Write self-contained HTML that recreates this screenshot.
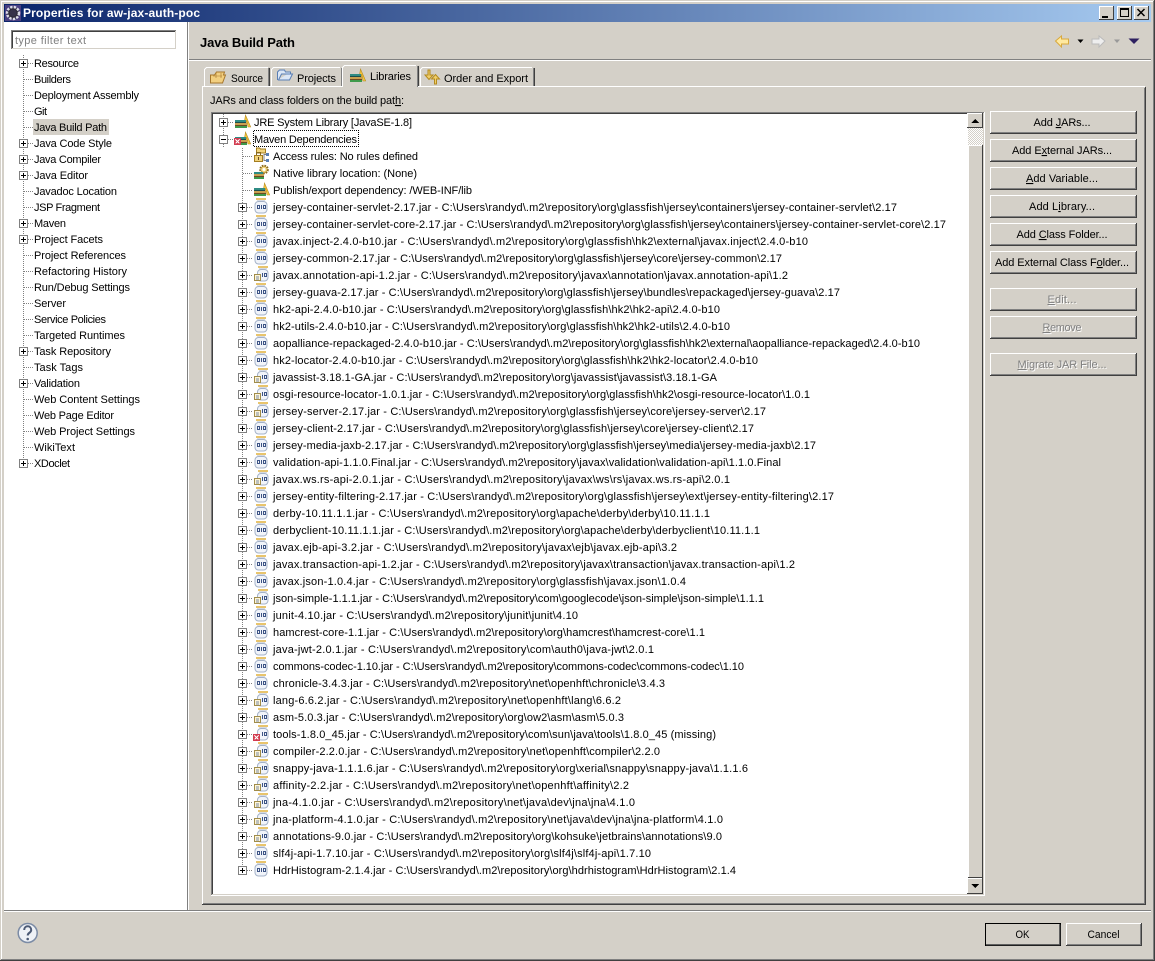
<!DOCTYPE html>
<html><head><meta charset="utf-8"><title>Properties for aw-jax-auth-poc</title>
<style>
html,body{margin:0;padding:0;background:#d4d0c8;overflow:hidden}
svg{display:block;font-family:"Liberation Sans",Arial,sans-serif;font-size:11px;fill:#000}
</style></head><body>
<svg width="1155" height="961" viewBox="0 0 1155 961" xmlns="http://www.w3.org/2000/svg" shape-rendering="crispEdges">
<defs>
<linearGradient id="tb" x1="0" x2="1" y1="0" y2="0"><stop offset="0" stop-color="#0a246a"/><stop offset="1" stop-color="#a6caf0"/></linearGradient>
<pattern id="chk" width="2" height="2" patternUnits="userSpaceOnUse"><rect width="2" height="2" fill="#fff"/><rect width="1" height="1" fill="#d4d0c8"/><rect x="1" y="1" width="1" height="1" fill="#d4d0c8"/></pattern>
<pattern id="dot" width="2" height="2" patternUnits="userSpaceOnUse"><rect width="1" height="1" fill="#000"/><rect x="1" y="1" width="1" height="1" fill="#000"/></pattern>
<symbol id="p" width="9" height="9" overflow="visible"><rect x=".5" y=".5" width="8" height="8" fill="#fff" stroke="#808080"/><path d="M2 4.500h5M4.500 2v5" stroke="#000" fill="none"/></symbol>
<symbol id="m" width="9" height="9" overflow="visible"><rect x=".5" y=".5" width="8" height="8" fill="#fff" stroke="#808080"/><path d="M2 4.500h5" stroke="#000" fill="none"/></symbol>
<symbol id="lib" width="16" height="16" overflow="visible">
<path d="M10.500 1L8.500 13h2.200l1-7 1.300 7h2.700z" fill="#f3c63e" stroke="#b88c20" stroke-width=".6" shape-rendering="auto"/>
<rect x="0" y="6" width="11" height="3" fill="#2f8c84"/><rect x="0" y="8" width="11" height="1" fill="#1d4f4a"/>
<rect x="0" y="9" width="12" height="2" fill="#c9a050"/><rect x="0" y="11" width="12" height="1" fill="#6b4a20"/>
<rect x="0" y="12" width="12" height="2" fill="#3f9a4c"/></symbol>
<symbol id="libx" width="16" height="16" overflow="visible"><use href="#lib"/><rect x="-1" y="7" width="7" height="7" fill="#d23c50"/><path d="M.5 8.500l4 4M4.500 8.500l-4 4" stroke="#fff" fill="none"/></symbol>
<symbol id="jar" width="16" height="16" overflow="visible"><rect x="2" y="-1" width="10" height="2" fill="#e8c46c"/><rect x="3" y="1" width="8" height="1" fill="#d6dbe4"/><rect x="1" y="2.500" width="12" height="11.500" rx="3.500" fill="#f1f4fa" stroke="#a4b2c8" shape-rendering="auto"/><g fill="none" stroke="#3d5485"><rect x="3.500" y="6.500" width="2" height="3"/><path d="M7.500 6v4"/><rect x="9.500" y="6.500" width="2" height="3"/></g></symbol>
<symbol id="jara" width="16" height="16" overflow="visible"><rect x="5" y="-1" width="10" height="2" fill="#e8c46c"/><rect x="6" y="1" width="8" height="1" fill="#d6dbe4"/><rect x="4.500" y="2.500" width="10.500" height="11.500" rx="3.500" fill="#f1f4fa" stroke="#a4b2c8" shape-rendering="auto"/><g fill="none" stroke="#3d5485"><path d="M9.500 6v4"/><rect x="11.500" y="6.500" width="2" height="3"/></g><rect x="1.500" y="7.500" width="6" height="6" fill="#fff6d8" stroke="#a08c4a"/><path d="M3 10h3M3 12h3" stroke="#7a8aa5" fill="none"/></symbol>
<symbol id="jarx" width="16" height="16" overflow="visible"><rect x="5" y="-1" width="10" height="2" fill="#e8c46c"/><rect x="6" y="1" width="8" height="1" fill="#d6dbe4"/><rect x="4.500" y="2.500" width="10.500" height="11.500" rx="3.500" fill="#f1f4fa" stroke="#a4b2c8" shape-rendering="auto"/><g fill="none" stroke="#3d5485"><path d="M9.500 6v4"/><rect x="11.500" y="6.500" width="2" height="3"/></g><rect x="0" y="8" width="7" height="7" fill="#d23c50"/><path d="M1.500 9.500l4 4M5.500 9.500l-4 4" stroke="#fff" fill="none"/></symbol>
<symbol id="btn" width="147" height="23" overflow="visible"><rect width="147" height="23" fill="#d4d0c8"/><path d="M.5 22V.5h146" stroke="#fff" fill="none"/><path d="M146.500 0v22.500H0" stroke="#404040" fill="none"/><path d="M145.500 1v20.500H1" stroke="#808080" fill="none"/></symbol>
<symbol id="btn2" width="76" height="23" overflow="visible"><rect width="76" height="23" fill="#d4d0c8"/><path d="M.5 22V.5h75" stroke="#fff" fill="none"/><path d="M75.500 0v22.500H0" stroke="#404040" fill="none"/><path d="M74.500 1v20.500H1" stroke="#808080" fill="none"/></symbol>
</defs>

<!-- window frame -->
<rect width="1155" height="961" fill="#d4d0c8"/>
<path d="M1.500 960V1.500H1154" stroke="#fff" fill="none"/>
<path d="M1154.500 0v960.500H0" stroke="#404040" fill="none"/>
<path d="M1153.500 1v958.500H1" stroke="#808080" fill="none"/>
<rect x="4" y="4" width="1147" height="18" fill="url(#tb)"/>
<rect x="5" y="5" width="16" height="16" fill="#4a3f80"/>
<g shape-rendering="auto"><circle cx="13" cy="13" r="6" fill="#2e2a3a" stroke="#dcdce6" stroke-width="2.500" stroke-dasharray="2.400 1.200"/><circle cx="13" cy="13" r="3.500" fill="#37324a"/></g>
<text x="23" y="17" font-weight="bold" font-size="12" style="fill:#fff" textLength="177">Properties for aw-jax-auth-poc</text>
<!-- window buttons -->
<g>
<rect x="1099" y="6" width="15" height="14" fill="#d4d0c8"/><path d="M1099.500 19V6.500H1113" stroke="#fff" fill="none"/><path d="M1113.500 6v13.500H1099" stroke="#404040" fill="none"/><rect x="1102" y="16" width="6" height="2" fill="#000"/>
<rect x="1117" y="6" width="15" height="14" fill="#d4d0c8"/><path d="M1117.500 19V6.500H1131" stroke="#fff" fill="none"/><path d="M1131.500 6v13.500H1117" stroke="#404040" fill="none"/><rect x="1120.500" y="8.500" width="8" height="8" fill="none" stroke="#000"/><rect x="1120" y="8" width="9" height="2" fill="#000"/>
<rect x="1134" y="6" width="15" height="14" fill="#d4d0c8"/><path d="M1134.500 19V6.500H1148" stroke="#fff" fill="none"/><path d="M1148.500 6v13.500H1134" stroke="#404040" fill="none"/><path d="M1137.500 9l7 7M1144.500 9l-7 7" stroke="#000" stroke-width="1.500" fill="none" shape-rendering="auto"/>
</g>

<!-- sidebar -->
<rect x="4" y="22" width="183" height="888" fill="#fff"/>
<rect x="187" y="22" width="1" height="888" fill="#808080"/>
<rect x="188" y="22" width="1" height="888" fill="#fff"/>
<rect x="4" y="910" width="1147" height="1" fill="#808080"/>
<rect x="4" y="911" width="1147" height="1" fill="#fff"/>
<rect x="189" y="59" width="962" height="1" fill="#808080"/>
<rect x="189" y="60" width="962" height="1" fill="#fff"/>
<!-- filter -->
<rect x="11" y="30" width="165" height="19" fill="#fff"/>
<path d="M11.500 49V30.500H176" stroke="#808080" fill="none"/>
<path d="M12.500 48V31.500H175" stroke="#404040" fill="none"/>
<path d="M175.500 31v17.500H12" stroke="#d4d0c8" fill="none"/>
<text x="15" y="44" style="fill:#808080" textLength="71">type filter text</text>
<!-- sidebar tree -->
<path d="M23.500 55V463" stroke="#808080" stroke-dasharray="1 1" fill="none"/>
<g stroke="#808080" stroke-dasharray="1 1" fill="none">
<path d="M28 63.500h5M24 79.500h9M24 95.500h9M24 111.500h9M24 127.500h9M28 143.500h5M28 159.500h5M28 175.500h5M24 191.500h9M24 207.500h9M28 223.500h5M28 239.500h5M24 255.500h9M24 271.500h9M24 287.500h9M24 303.500h9M24 319.500h9M24 335.500h9M28 351.500h5M24 367.500h9M28 383.500h5M24 399.500h9M24 415.500h9M24 431.500h9M24 447.500h9M28 463.500h5"/>
</g>
<rect x="33" y="119" width="76" height="16" fill="#d4d0c8"/>
<use href="#p" x="19" y="59"/><use href="#p" x="19" y="139"/><use href="#p" x="19" y="155"/><use href="#p" x="19" y="171"/><use href="#p" x="19" y="219"/><use href="#p" x="19" y="235"/><use href="#p" x="19" y="347"/><use href="#p" x="19" y="379"/><use href="#p" x="19" y="459"/>
<g>
<text x="34" y="67" textLength="45">Resource</text>
<text x="34" y="83" textLength="37">Builders</text>
<text x="34" y="99" textLength="105">Deployment Assembly</text>
<text x="34" y="115" textLength="13">Git</text>
<text x="34" y="131" textLength="73">Java Build Path</text>
<text x="34" y="147" textLength="78">Java Code Style</text>
<text x="34" y="163" textLength="67">Java Compiler</text>
<text x="34" y="179" textLength="54">Java Editor</text>
<text x="34" y="195" textLength="83">Javadoc Location</text>
<text x="34" y="211" textLength="66">JSP Fragment</text>
<text x="34" y="227" textLength="32">Maven</text>
<text x="34" y="243" textLength="69">Project Facets</text>
<text x="34" y="259" textLength="92">Project References</text>
<text x="34" y="275" textLength="93">Refactoring History</text>
<text x="34" y="291" textLength="96">Run/Debug Settings</text>
<text x="34" y="307" textLength="32">Server</text>
<text x="34" y="323" textLength="72">Service Policies</text>
<text x="34" y="339" textLength="91">Targeted Runtimes</text>
<text x="34" y="355" textLength="77">Task Repository</text>
<text x="34" y="371" textLength="49">Task Tags</text>
<text x="34" y="387" textLength="46">Validation</text>
<text x="34" y="403" textLength="106">Web Content Settings</text>
<text x="34" y="419" textLength="80">Web Page Editor</text>
<text x="34" y="435" textLength="101">Web Project Settings</text>
<text x="34" y="451" textLength="41">WikiText</text>
<text x="34" y="467" textLength="36">XDoclet</text>
</g>

<!-- header -->
<text x="200" y="47" font-weight="bold" font-size="13" textLength="95">Java Build Path</text>
<g shape-rendering="auto">
<path d="M1055.500 41l6-5v3h7v5h-7v3z" fill="#ffe9a0" stroke="#d9a93c"/>
<path d="M1077.500 39.500h6l-3 3.500z" fill="#000"/>
<path d="M1105 41l-6-5v3h-7v5h7v3z" fill="#eee" stroke="#bbb"/>
<path d="M1114 39.500h6l-3 3.500z" fill="#999"/>
<path d="M1128.500 38.500h11l-5.500 5.500z" fill="#2e2060"/>
</g>

<!-- tab panel -->
<rect x="202" y="87" width="944" height="818" fill="#d4d0c8"/>
<path d="M202.500 904V86.500H1145" stroke="#fff" fill="none"/>
<path d="M1145.500 87v817.500H202" stroke="#404040" fill="none"/>
<path d="M1144.500 88v815.500H203" stroke="#808080" fill="none"/>
<!-- tabs -->
<g fill="none">
<path d="M204.500 86V69.500l2-2H268" stroke="#fff"/><path d="M269.500 68V86" stroke="#404040"/><path d="M268.500 68V86" stroke="#808080"/>
<path d="M271.500 86V69.500l2-2H340" stroke="#fff"/><path d="M341.500 68V86" stroke="#808080"/>
<path d="M420.500 86V69.500l2-2H532" stroke="#fff"/><path d="M534.500 68V86" stroke="#404040"/><path d="M533.500 68V86" stroke="#808080"/>
</g>
<rect x="342" y="65" width="76" height="23" fill="#d4d0c8"/>
<path d="M342.500 87V67.500l2-2H416" stroke="#fff" fill="none"/>
<path d="M418.500 66V86" stroke="#404040" fill="none"/><path d="M417.500 66V87" stroke="#808080" fill="none"/>
<g shape-rendering="auto">
<path d="M210.500 83v-8h4l2-3h8l-1 3h2l-3 8z" fill="#f2cf80" stroke="#a6762b"/><path d="M216 73v5M221 73v5M213 76h9" stroke="#a6762b" stroke-width=".6" fill="none"/>
<path d="M277.500 80V72l2-2h5l1 2h5v2h-9l-3 6h11l3-6h-5" fill="#dce7f6" stroke="#5a7fb5"/>
<path d="M428 70v5h-3l4 4.500 4-4.500h-3v-5z" fill="#f1cf6a" stroke="#b48a1e"/><path d="M434.500 84v-5h-3l4-4.500 4 4.500h-3v5z" fill="#f1cf6a" stroke="#b48a1e"/>
</g>
<use href="#lib" x="350" y="68"/>
<text x="231" y="82" textLength="32" lengthAdjust="spacingAndGlyphs">Source</text>
<text x="297" y="82" textLength="39">Projects</text>
<text x="370" y="80" textLength="41">Libraries</text>
<text x="444" y="82" textLength="84">Order and Export</text>
<text x="210" y="104" textLength="194">JARs and class folders on the build pat<tspan text-decoration="underline">h</tspan>:</text>

<!-- list -->
<rect x="213" y="114" width="755" height="781" fill="#fff"/>
<path d="M211.500 895V112.500H984" stroke="#808080" fill="none"/>
<path d="M212.500 894V113.500H983" stroke="#404040" fill="none"/>
<path d="M984.500 112v783.500H211" stroke="#fff" fill="none"/>
<path d="M983.500 113v781.500H212" stroke="#d4d0c8" fill="none"/>
<!-- scrollbar -->
<rect x="968" y="128" width="15" height="17" fill="url(#chk)"/>
<g>
<rect x="967" y="113" width="16" height="15" fill="#d4d0c8"/><path d="M967.500 127V113.500H982" stroke="#fff" fill="none"/><path d="M982.500 113v14.500H967" stroke="#404040" fill="none"/><path d="M971 123h8l-4-4z" fill="#000"/>
<rect x="968" y="145" width="15" height="733" fill="#d4d0c8"/><path d="M968.500 877V145.500H982" stroke="#fff" fill="none"/><path d="M982.500 145v732.500H968" stroke="#404040" fill="none"/>
<rect x="967" y="878" width="16" height="16" fill="#d4d0c8"/><path d="M967.500 893V878.500H982" stroke="#fff" fill="none"/><path d="M982.500 878v15.500H967" stroke="#404040" fill="none"/><path d="M971 884h8l-4 4z" fill="#000"/>
</g>
<!-- tree lines -->
<g stroke="#808080" stroke-dasharray="1 1" fill="none">
<path d="M223.500 114V147M228 122.500h6M228 139.500h6M242.500 148V866M243 156.500h10M243 173.500h10M243 190.500h10"/>
<path d="M247 207.500h6M247 224.500h6M247 241.500h6M247 258.500h6M247 275.500h6M247 292.500h6M247 309.500h6M247 326.500h6M247 343.500h6M247 360.500h6M247 377.500h6M247 394.500h6M247 411.500h6M247 428.500h6M247 445.500h6M247 462.500h6M247 479.500h6M247 496.500h6M247 513.500h6M247 530.500h6M247 547.500h6M247 564.500h6M247 581.500h6M247 598.500h6M247 615.500h6M247 632.500h6M247 649.500h6M247 666.500h6M247 683.500h6M247 700.500h6M247 717.500h6M247 734.500h6M247 751.500h6M247 768.500h6M247 785.500h6M247 802.500h6M247 819.500h6M247 836.500h6M247 853.500h6M247 870.500h6"/>
</g>
<use href="#p" x="219" y="118"/><use href="#m" x="219" y="135"/>
<use href="#lib" x="235" y="114"/><use href="#libx" x="235" y="131"/>
<text x="254" y="126" textLength="158">JRE System Library [JavaSE-1.8]</text>
<g fill="url(#dot)"><rect x="253" y="130" width="106" height="1"/><rect x="253" y="146" width="106" height="1"/><rect x="253" y="130" width="1" height="17"/><rect x="358" y="130" width="1" height="17"/></g>
<text x="254" y="143" textLength="103">Maven Dependencies</text>
<!-- access rules icon -->
<path d="M256.500 153v-5h3l1 1h5v4z" fill="#f2d57e" stroke="#a37c1f"/>
<path d="M256.500 155v-2.500h4v2.500" fill="none" stroke="#8a6a1e"/>
<rect x="254.500" y="155.500" width="8" height="6" fill="#f0d27a" stroke="#a37c1f"/>
<rect x="258" y="157" width="1" height="3" fill="#6b4a20"/>
<path d="M264 154.500h2M264 154v6.500h2" stroke="#808080" fill="none"/>
<rect x="266" y="153" width="3" height="3" fill="#5a7fb5"/><rect x="266" y="159" width="3" height="3" fill="#5a7fb5"/>
<!-- native library icon -->
<g shape-rendering="auto"><circle cx="264" cy="169.500" r="3.800" fill="#f2d57e" stroke="#8a6a1e" stroke-width="2" stroke-dasharray="1.600 1"/><circle cx="264" cy="169.500" r="1.500" fill="#fff"/></g>
<rect x="254" y="172" width="9" height="2" fill="#2f8c84"/><rect x="254" y="174" width="10" height="2" fill="#c9a050"/><rect x="254" y="176" width="10" height="1" fill="#6b4a20"/><rect x="254" y="177" width="10" height="2" fill="#3f9a4c"/>
<use href="#lib" x="254" y="182"/>
<text x="273" y="160" textLength="145">Access rules: No rules defined</text>
<text x="273" y="177" textLength="144">Native library location: (None)</text>
<text x="273" y="194" textLength="199">Publish/export dependency: /WEB-INF/lib</text>

<g>
<use href="#p" x="238" y="203"/><use href="#jar" x="254" y="199"/><text x="273" y="211" textLength="624">jersey-container-servlet-2.17.jar - C:\Users\randyd\.m2\repository\org\glassfish\jersey\containers\jersey-container-servlet\2.17</text>
<use href="#p" x="238" y="220"/><use href="#jar" x="254" y="216"/><text x="273" y="228" textLength="673">jersey-container-servlet-core-2.17.jar - C:\Users\randyd\.m2\repository\org\glassfish\jersey\containers\jersey-container-servlet-core\2.17</text>
<use href="#p" x="238" y="237"/><use href="#jar" x="254" y="233"/><text x="273" y="245" textLength="535">javax.inject-2.4.0-b10.jar - C:\Users\randyd\.m2\repository\org\glassfish\hk2\external\javax.inject\2.4.0-b10</text>
<use href="#p" x="238" y="254"/><use href="#jar" x="254" y="250"/><text x="273" y="262" textLength="509">jersey-common-2.17.jar - C:\Users\randyd\.m2\repository\org\glassfish\jersey\core\jersey-common\2.17</text>
<use href="#p" x="238" y="271"/><use href="#jara" x="253" y="267"/><text x="273" y="279" textLength="515">javax.annotation-api-1.2.jar - C:\Users\randyd\.m2\repository\javax\annotation\javax.annotation-api\1.2</text>
<use href="#p" x="238" y="288"/><use href="#jar" x="254" y="284"/><text x="273" y="296" textLength="567">jersey-guava-2.17.jar - C:\Users\randyd\.m2\repository\org\glassfish\jersey\bundles\repackaged\jersey-guava\2.17</text>
<use href="#p" x="238" y="305"/><use href="#jar" x="254" y="301"/><text x="273" y="313" textLength="447">hk2-api-2.4.0-b10.jar - C:\Users\randyd\.m2\repository\org\glassfish\hk2\hk2-api\2.4.0-b10</text>
<use href="#p" x="238" y="322"/><use href="#jar" x="254" y="318"/><text x="273" y="330" textLength="457">hk2-utils-2.4.0-b10.jar - C:\Users\randyd\.m2\repository\org\glassfish\hk2\hk2-utils\2.4.0-b10</text>
<use href="#p" x="238" y="339"/><use href="#jar" x="254" y="335"/><text x="273" y="347" textLength="647">aopalliance-repackaged-2.4.0-b10.jar - C:\Users\randyd\.m2\repository\org\glassfish\hk2\external\aopalliance-repackaged\2.4.0-b10</text>
<use href="#p" x="238" y="356"/><use href="#jar" x="254" y="352"/><text x="273" y="364" textLength="485">hk2-locator-2.4.0-b10.jar - C:\Users\randyd\.m2\repository\org\glassfish\hk2\hk2-locator\2.4.0-b10</text>
<use href="#p" x="238" y="373"/><use href="#jara" x="253" y="369"/><text x="273" y="381" textLength="444">javassist-3.18.1-GA.jar - C:\Users\randyd\.m2\repository\org\javassist\javassist\3.18.1-GA</text>
<use href="#p" x="238" y="390"/><use href="#jara" x="253" y="386"/><text x="273" y="398" textLength="537">osgi-resource-locator-1.0.1.jar - C:\Users\randyd\.m2\repository\org\glassfish\hk2\osgi-resource-locator\1.0.1</text>
<use href="#p" x="238" y="407"/><use href="#jara" x="253" y="403"/><text x="273" y="415" textLength="493">jersey-server-2.17.jar - C:\Users\randyd\.m2\repository\org\glassfish\jersey\core\jersey-server\2.17</text>
<use href="#p" x="238" y="424"/><use href="#jar" x="254" y="420"/><text x="273" y="432" textLength="481">jersey-client-2.17.jar - C:\Users\randyd\.m2\repository\org\glassfish\jersey\core\jersey-client\2.17</text>
<use href="#p" x="238" y="441"/><use href="#jar" x="254" y="437"/><text x="273" y="449" textLength="543">jersey-media-jaxb-2.17.jar - C:\Users\randyd\.m2\repository\org\glassfish\jersey\media\jersey-media-jaxb\2.17</text>
<use href="#p" x="238" y="458"/><use href="#jar" x="254" y="454"/><text x="273" y="466" textLength="508">validation-api-1.1.0.Final.jar - C:\Users\randyd\.m2\repository\javax\validation\validation-api\1.1.0.Final</text>
<use href="#p" x="238" y="475"/><use href="#jara" x="253" y="471"/><text x="273" y="483" textLength="457">javax.ws.rs-api-2.0.1.jar - C:\Users\randyd\.m2\repository\javax\ws\rs\javax.ws.rs-api\2.0.1</text>
<use href="#p" x="238" y="492"/><use href="#jar" x="254" y="488"/><text x="273" y="500" textLength="561">jersey-entity-filtering-2.17.jar - C:\Users\randyd\.m2\repository\org\glassfish\jersey\ext\jersey-entity-filtering\2.17</text>
<use href="#p" x="238" y="509"/><use href="#jar" x="254" y="505"/><text x="273" y="517" textLength="437">derby-10.11.1.1.jar - C:\Users\randyd\.m2\repository\org\apache\derby\derby\10.11.1.1</text>
<use href="#p" x="238" y="526"/><use href="#jar" x="254" y="522"/><text x="273" y="534" textLength="487">derbyclient-10.11.1.1.jar - C:\Users\randyd\.m2\repository\org\apache\derby\derbyclient\10.11.1.1</text>
<use href="#p" x="238" y="543"/><use href="#jar" x="254" y="539"/><text x="273" y="551" textLength="404">javax.ejb-api-3.2.jar - C:\Users\randyd\.m2\repository\javax\ejb\javax.ejb-api\3.2</text>
<use href="#p" x="238" y="560"/><use href="#jar" x="254" y="556"/><text x="273" y="568" textLength="522">javax.transaction-api-1.2.jar - C:\Users\randyd\.m2\repository\javax\transaction\javax.transaction-api\1.2</text>
<use href="#p" x="238" y="577"/><use href="#jar" x="254" y="573"/><text x="273" y="585" textLength="413">javax.json-1.0.4.jar - C:\Users\randyd\.m2\repository\org\glassfish\javax.json\1.0.4</text>
<use href="#p" x="238" y="594"/><use href="#jara" x="253" y="590"/><text x="273" y="602" textLength="491">json-simple-1.1.1.jar - C:\Users\randyd\.m2\repository\com\googlecode\json-simple\json-simple\1.1.1</text>
<use href="#p" x="238" y="611"/><use href="#jar" x="254" y="607"/><text x="273" y="619" textLength="305">junit-4.10.jar - C:\Users\randyd\.m2\repository\junit\junit\4.10</text>
<use href="#p" x="238" y="628"/><use href="#jar" x="254" y="624"/><text x="273" y="636" textLength="432">hamcrest-core-1.1.jar - C:\Users\randyd\.m2\repository\org\hamcrest\hamcrest-core\1.1</text>
<use href="#p" x="238" y="645"/><use href="#jar" x="254" y="641"/><text x="273" y="653" textLength="381">java-jwt-2.0.1.jar - C:\Users\randyd\.m2\repository\com\auth0\java-jwt\2.0.1</text>
<use href="#p" x="238" y="662"/><use href="#jar" x="254" y="658"/><text x="273" y="670" textLength="471">commons-codec-1.10.jar - C:\Users\randyd\.m2\repository\commons-codec\commons-codec\1.10</text>
<use href="#p" x="238" y="679"/><use href="#jar" x="254" y="675"/><text x="273" y="687" textLength="392">chronicle-3.4.3.jar - C:\Users\randyd\.m2\repository\net\openhft\chronicle\3.4.3</text>
<use href="#p" x="238" y="696"/><use href="#jara" x="253" y="692"/><text x="273" y="704" textLength="348">lang-6.6.2.jar - C:\Users\randyd\.m2\repository\net\openhft\lang\6.6.2</text>
<use href="#p" x="238" y="713"/><use href="#jara" x="253" y="709"/><text x="273" y="721" textLength="351">asm-5.0.3.jar - C:\Users\randyd\.m2\repository\org\ow2\asm\asm\5.0.3</text>
<use href="#p" x="238" y="730"/><use href="#jarx" x="253" y="726"/><text x="273" y="738" textLength="443">tools-1.8.0_45.jar - C:\Users\randyd\.m2\repository\com\sun\java\tools\1.8.0_45 (missing)</text>
<use href="#p" x="238" y="747"/><use href="#jara" x="253" y="743"/><text x="273" y="755" textLength="387">compiler-2.2.0.jar - C:\Users\randyd\.m2\repository\net\openhft\compiler\2.2.0</text>
<use href="#p" x="238" y="764"/><use href="#jara" x="253" y="760"/><text x="273" y="772" textLength="475">snappy-java-1.1.1.6.jar - C:\Users\randyd\.m2\repository\org\xerial\snappy\snappy-java\1.1.1.6</text>
<use href="#p" x="238" y="781"/><use href="#jara" x="253" y="777"/><text x="273" y="789" textLength="356">affinity-2.2.jar - C:\Users\randyd\.m2\repository\net\openhft\affinity\2.2</text>
<use href="#p" x="238" y="798"/><use href="#jara" x="253" y="794"/><text x="273" y="806" textLength="362">jna-4.1.0.jar - C:\Users\randyd\.m2\repository\net\java\dev\jna\jna\4.1.0</text>
<use href="#p" x="238" y="815"/><use href="#jara" x="253" y="811"/><text x="273" y="823" textLength="450">jna-platform-4.1.0.jar - C:\Users\randyd\.m2\repository\net\java\dev\jna\jna-platform\4.1.0</text>
<use href="#p" x="238" y="832"/><use href="#jara" x="253" y="828"/><text x="273" y="840" textLength="449">annotations-9.0.jar - C:\Users\randyd\.m2\repository\org\kohsuke\jetbrains\annotations\9.0</text>
<use href="#p" x="238" y="849"/><use href="#jar" x="254" y="845"/><text x="273" y="857" textLength="378">slf4j-api-1.7.10.jar - C:\Users\randyd\.m2\repository\org\slf4j\slf4j-api\1.7.10</text>
<use href="#p" x="238" y="866"/><use href="#jar" x="254" y="862"/><text x="273" y="874" textLength="463">HdrHistogram-2.1.4.jar - C:\Users\randyd\.m2\repository\org\hdrhistogram\HdrHistogram\2.1.4</text>
</g>

<!-- right buttons -->
<use href="#btn" x="990" y="111"/><use href="#btn" x="990" y="139"/><use href="#btn" x="990" y="167"/><use href="#btn" x="990" y="195"/><use href="#btn" x="990" y="223"/><use href="#btn" x="990" y="251"/><use href="#btn" x="990" y="288"/><use href="#btn" x="990" y="316"/><use href="#btn" x="990" y="353"/>
<g text-anchor="middle">
<text x="1062" y="126" textLength="57">Add <tspan text-decoration="underline">J</tspan>ARs...</text>
<text x="1062" y="154" textLength="100">Add E<tspan text-decoration="underline">x</tspan>ternal JARs...</text>
<text x="1062" y="182" textLength="72"><tspan text-decoration="underline">A</tspan>dd Variable...</text>
<text x="1062" y="210" textLength="66">Add L<tspan text-decoration="underline">i</tspan>brary...</text>
<text x="1062" y="238" textLength="91">Add <tspan text-decoration="underline">C</tspan>lass Folder...</text>
<text x="1062" y="266" textLength="134">Add External Class F<tspan text-decoration="underline">o</tspan>lder...</text>
<text x="1063" y="304" style="fill:#fff" textLength="29"><tspan text-decoration="underline">E</tspan>dit...</text>
<text x="1062" y="303" style="fill:#808080" textLength="29"><tspan text-decoration="underline">E</tspan>dit...</text>
<text x="1063" y="332" style="fill:#fff" textLength="39"><tspan text-decoration="underline">R</tspan>emove</text>
<text x="1062" y="331" style="fill:#808080" textLength="39"><tspan text-decoration="underline">R</tspan>emove</text>
<text x="1063" y="369" style="fill:#fff" textLength="89"><tspan text-decoration="underline">M</tspan>igrate JAR File...</text>
<text x="1062" y="368" style="fill:#808080" textLength="89"><tspan text-decoration="underline">M</tspan>igrate JAR File...</text>
</g>

<!-- bottom -->
<g shape-rendering="auto">
<circle cx="27.700" cy="933" r="9.500" fill="#eef1f6" stroke="#7b8ba5" stroke-width="1.500"/>
<path d="M24.200 930c0-5 7-5 7 0 0 3-3.500 2.500-3.500 5.500" fill="none" stroke="#4c5a75" stroke-width="2"/>
<circle cx="27.700" cy="939" r="1.300" fill="#4c5a75"/>
</g>
<use href="#btn2" x="985" y="923"/>
<rect x="985.500" y="923.500" width="75" height="22" fill="none" stroke="#000"/>
<path d="M1060 924.500v20.500H986" stroke="#404040" fill="none"/>
<use href="#btn2" x="1066" y="923"/>
<text x="1022.500" y="938" text-anchor="middle" textLength="14" lengthAdjust="spacingAndGlyphs">OK</text>
<text x="1103.500" y="938" text-anchor="middle" textLength="32" lengthAdjust="spacingAndGlyphs">Cancel</text>
</svg>
</body></html>
